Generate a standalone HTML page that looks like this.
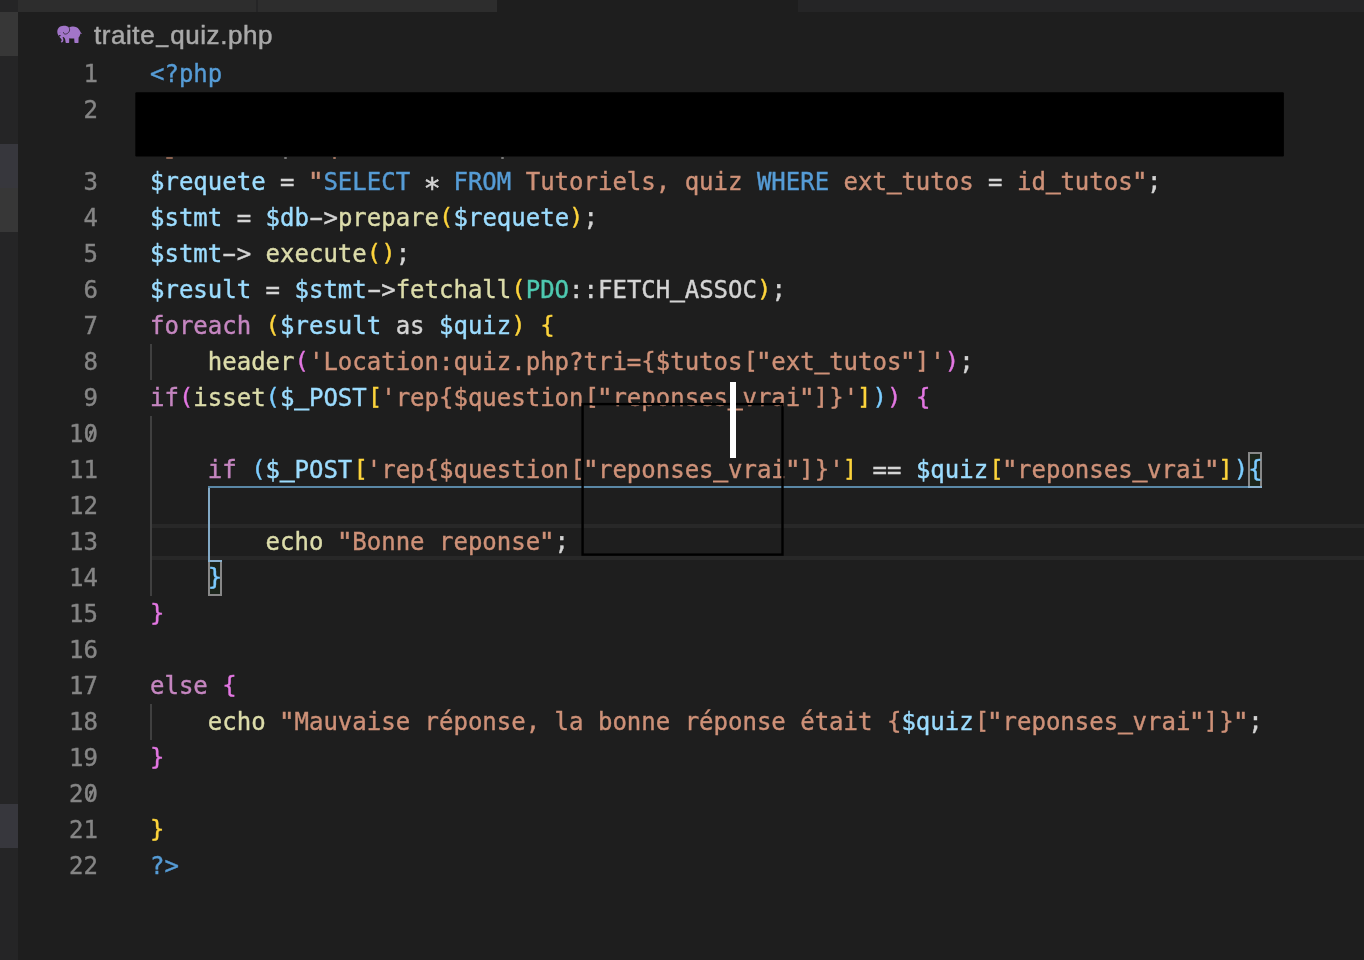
<!DOCTYPE html>
<html lang="fr">
<head>
<meta charset="utf-8">
<title>traite_quiz.php</title>
<style>
*{box-sizing:border-box;margin:0;padding:0}
html,body{width:1364px;height:960px;overflow:hidden;background:#1e1e1e}
body{position:relative;font-family:"DejaVu Sans Mono","Liberation Mono",monospace;color:#d4d4d4}
.abs{position:absolute}
#side{left:0;top:0;width:18px;height:960px;background:#252526}
.row{position:absolute;left:0;width:18px;height:44px}
#tabs{left:18px;top:0;width:1346px;height:12px;background:#252526}
.tab{position:absolute;top:0;height:12px;background:#2d2d2d}
#crumb{left:94px;top:12px;height:44px;line-height:44px;font-family:"Liberation Sans",sans-serif;font-size:26px;letter-spacing:0.56px;color:#a9a9a9;white-space:nowrap;will-change:transform;-webkit-text-stroke:0.5px;transform:translateY(0.5px)}
#ed{left:0;top:56px;width:1364px;height:904px;will-change:transform}
.ln{position:absolute;left:18px;width:80px;height:36px;line-height:36px;font-size:24px;text-align:right;color:#858585;white-space:pre;-webkit-text-stroke:0.4px}
.cl{position:absolute;left:150px;height:36px;line-height:36px;font-size:24px;white-space:pre;-webkit-text-stroke:0.4px}
.v{color:#9cdcfe}.s{color:#ce9178}.k{color:#569cd6}.f{color:#dcdcaa}.c{color:#c586c0}.t{color:#4ec9b0}
.b1{color:#fdd43c}.b2{color:#e377e2}.b3{color:#7ccdff}
i{font-style:normal;display:inline-block}
.u{-webkit-text-stroke:1px;transform:translateY(-2.4px)}
.hy{transform:scaleX(1.8)}
.as{transform:translateY(6px) scale(1.2)}
.br{transform:translateY(-0.7px) scaleY(0.985)}
.bl{transform:translate(1.1px,-0.7px) scaleY(0.985)}
.bq{transform:translate(-1px,-0.7px) scaleY(0.985)}
.z{position:relative}
.z::after{content:"";position:absolute;left:50%;top:50%;width:2.2px;height:14px;background:#858585;transform:translate(-50%,-50%) translate(0.3px,0.3px) rotate(25deg)}
.q{transform:scaleX(1.14);transform-origin:75% 50%}
.ig{position:absolute;width:2px;background:#404040}
</style>
</head>
<body>
<div id="side" class="abs">
  <div class="row" style="top:12px;background:#373737"></div>
  <div class="row" style="top:144px;background:#37373d"></div>
  <div class="row" style="top:188px;background:#373737"></div>
  <div class="row" style="top:804px;background:#37373d"></div>
</div>
<div id="tabs" class="abs">
  <div class="tab" style="left:0;width:238px"></div>
  <div class="tab" style="left:240px;width:239px"></div>
  <div class="tab" style="left:479px;width:301px;background:#1e1e1e"></div>
</div>
<svg class="abs" style="left:54px;top:22px" width="32" height="24" viewBox="0 0 32 24">
  <path fill="#a275c9" d="M3.3 10 C3.2 6.6 5.6 3.9 9.6 3.8 C11.8 3.7 13.9 4.3 15.2 5.6 C16.2 4.9 17.6 4.6 19.2 4.6 C21.6 4.6 23.6 5.6 25 7.4 C25.8 8.4 26.4 9.6 26.7 10.6 C27.1 10.9 27.6 11.4 27.9 12 C27.3 11.9 26.8 11.7 26.4 11.5 C26.2 13 25.5 14.4 24.6 15.6 L24.5 20.3 C24.6 20.7 24.4 20.9 24 20.9 L21 20.9 C20.6 20.9 20.4 20.7 20.4 20.3 L20.2 16.4 C18.6 16.7 16.8 16.6 15.2 16.3 L15.2 20.3 C15.2 20.7 15 20.9 14.6 20.9 L12.2 20.9 C11.8 20.9 11.6 20.7 11.6 20.3 L11.2 17.4 C11 16.5 10.4 15.6 9.4 15 C9 14.8 8.6 14.9 8.7 15.4 C9.3 16.4 9.6 17.6 9.3 18.7 C9 19.8 8.3 20.5 7.5 20.4 C6.9 20.3 6.6 19.8 7 19.4 C7.7 18.8 7.8 18 7.4 17.2 C6.9 16.4 5.8 15.6 5.2 14.6 L6.6 14 C6.9 13.3 6.4 12.8 5.6 12.9 C4.9 13 4.7 13.7 4.9 14.3 C4 13.1 3.4 11.6 3.3 10 Z"/>
  <path fill="none" stroke="#1e1e1e" stroke-width="0.7" stroke-linecap="round" d="M15.1 5.6 C16 7.1 15.8 9 14.7 10.3 C13.7 11.5 12.1 12.3 10.9 12.1 C10 11.9 9.5 11.2 9.4 10.5"/>
  <path fill="#8f66b3" d="M5.3 10.1 h1.4 v0.6 h-1.4z"/>
</svg>
<div id="crumb" class="abs">traite<i style="transform:translateY(-2px) scaleX(.82)">_</i>quiz.php</div>
<div id="ed" class="abs">
<div class="abs" style="left:150px;top:468px;width:1214px;height:36px;border-top:4px solid #282828;border-bottom:4px solid #282828"></div>
<div class="ig" style="left:150px;top:288px;height:36px;background:#404040"></div>
<div class="ig" style="left:150px;top:360px;height:180px;background:#404040"></div>
<div class="ig" style="left:150px;top:648px;height:36px;background:#404040"></div>
<div class="abs" style="left:208px;top:430px;width:1054px;height:2px;background:#5a87a6"></div>
<div class="abs" style="left:208px;top:432px;width:2px;height:72px;background:#82a9c6"></div>
<div class="abs" style="left:208px;top:504px;width:14px;height:36px;border:2px solid #888;background:#1b251b"></div>
<div class="abs" style="left:1248px;top:396px;width:14px;height:36px;border:2px solid #888;background:#1b251b"></div>
<div class="abs" style="left:208px;top:504px;width:14px;height:2px;background:#8ab2cf"></div>
<div class="abs" style="left:1248px;top:430px;width:14px;height:2px;background:#8ab2cf"></div>
<div class="ln" style="top:0px">1</div>
<div class="cl" style="top:0px"><span class="k">&lt;?php</span></div>
<div class="ln" style="top:36px">2</div>
<div class="ln" style="top:108px">3</div>
<div class="cl" style="top:108px"><span class="v">$requete</span> = <span class="s"><i class=q>&quot;</i></span><span class="k">SELECT</span> <i class="as">*</i> <span class="k">FROM</span><span class="s"> Tutoriels, quiz </span><span class="k">WHERE</span><span class="s"> ext<i class="u">_</i>tutos </span>=<span class="s"> id<i class="u">_</i>tutos<i class=q>&quot;</i></span>;</div>
<div class="ln" style="top:144px">4</div>
<div class="cl" style="top:144px"><span class="v">$stmt</span> = <span class="v">$db</span><i class="hy">-</i>&gt;<span class="f">prepare</span><span class="b1"><i class="br">(</i></span><span class="v">$requete</span><span class="b1"><i class="br">)</i></span>;</div>
<div class="ln" style="top:180px">5</div>
<div class="cl" style="top:180px"><span class="v">$stmt</span><i class="hy">-</i>&gt; <span class="f">execute</span><span class="b1"><i class="br">()</i></span>;</div>
<div class="ln" style="top:216px">6</div>
<div class="cl" style="top:216px"><span class="v">$result</span> = <span class="v">$stmt</span><i class="hy">-</i>&gt;<span class="f">fetchall</span><span class="b1"><i class="br">(</i></span><span class="t">PDO</span>::FETCH<i class="u">_</i>ASSOC<span class="b1"><i class="br">)</i></span>;</div>
<div class="ln" style="top:252px">7</div>
<div class="cl" style="top:252px"><span class="c">foreach</span> <span class="b1"><i class="br">(</i></span><span class="v">$result</span> as <span class="v">$quiz</span><span class="b1"><i class="br">)</i></span> <span class="b1"><i class="br">{</i></span></div>
<div class="ln" style="top:288px">8</div>
<div class="cl" style="top:288px">    <span class="f">header</span><span class="b2"><i class="br">(</i></span><span class="s">'Location:quiz.php?tri=<i class="br">{</i>$tutos<i class="bl">[</i><i class=q>&quot;</i>ext<i class="u">_</i>tutos<i class=q>&quot;</i><i class="bq">]</i>'</span><span class="b2"><i class="br">)</i></span>;</div>
<div class="ln" style="top:324px">9</div>
<div class="cl" style="top:324px"><span class="c">if</span><span class="b2"><i class="br">(</i></span><span class="f">isset</span><span class="b3"><i class="br">(</i></span><span class="v">$<i class="u">_</i>POST</span><span class="b1"><i class="bl">[</i></span><span class="s">'rep<i class="br">{</i>$question<i class="bl">[</i><i class=q>&quot;</i>reponses<i class="u">_</i>vrai<i class=q>&quot;</i><i class="bq">]</i><i class="br">}</i>'</span><span class="b1"><i class="bq">]</i></span><span class="b3"><i class="br">)</i></span><span class="b2"><i class="br">)</i></span> <span class="b2"><i class="br">{</i></span></div>
<div class="ln" style="top:360px">1<span class="z">0</span></div>
<div class="ln" style="top:396px">11</div>
<div class="cl" style="top:396px">    <span class="c">if</span> <span class="b3"><i class="br">(</i></span><span class="v">$<i class="u">_</i>POST</span><span class="b1"><i class="bl">[</i></span><span class="s">'rep<i class="br">{</i>$question<i class="bl">[</i><i class=q>&quot;</i>reponses<i class="u">_</i>vrai<i class=q>&quot;</i><i class="bq">]</i><i class="br">}</i>'</span><span class="b1"><i class="bq">]</i></span> == <span class="v">$quiz</span><span class="b1"><i class="bl">[</i></span><span class="s"><i class=q>&quot;</i>reponses<i class="u">_</i>vrai<i class=q>&quot;</i></span><span class="b1"><i class="bq">]</i></span><span class="b3"><i class="br">)</i></span><span class="b3"><i class="br">{</i></span></div>
<div class="ln" style="top:432px">12</div>
<div class="ln" style="top:468px">13</div>
<div class="cl" style="top:468px">        <span class="f">echo</span> <span class="s"><i class=q>&quot;</i>Bonne reponse<i class=q>&quot;</i></span>;</div>
<div class="ln" style="top:504px">14</div>
<div class="cl" style="top:504px">    <span class="b3"><i class="br">}</i></span></div>
<div class="ln" style="top:540px">15</div>
<div class="cl" style="top:540px"><span class="b2"><i class="br">}</i></span></div>
<div class="ln" style="top:576px">16</div>
<div class="ln" style="top:612px">17</div>
<div class="cl" style="top:612px"><span class="c">else</span> <span class="b2"><i class="br">{</i></span></div>
<div class="ln" style="top:648px">18</div>
<div class="cl" style="top:648px">    <span class="f">echo</span> <span class="s"><i class=q>&quot;</i>Mauvaise réponse, la bonne réponse était <i class="br">{</i></span><span class="v">$quiz</span><span class="s"><i class="bl">[</i><i class=q>&quot;</i>reponses<i class="u">_</i>vrai<i class=q>&quot;</i><i class="bq">]</i><i class="br">}</i><i class=q>&quot;</i></span>;</div>
<div class="ln" style="top:684px">19</div>
<div class="cl" style="top:684px"><span class="b2"><i class="br">}</i></span></div>
<div class="ln" style="top:720px">2<span class="z">0</span></div>
<div class="ln" style="top:756px">21</div>
<div class="cl" style="top:756px"><span class="b1"><i class="br">}</i></span></div>
<div class="ln" style="top:792px">22</div>
<div class="cl" style="top:792px"><span class="k">?&gt;</span></div>
</div>
<svg class="abs" style="left:130px;top:88px" width="1160" height="74" viewBox="130 88 1160 74"><rect x="135.3" y="92.2" width="1148.6" height="64.2" rx="1.2" fill="#000"/></svg>
<svg class="abs" style="left:570px;top:395px" width="226" height="170" viewBox="570 395 226 170"><rect x="582.6" y="404.1" width="199.9" height="150.5" fill="none" stroke="#000" stroke-width="2.4"/></svg>
<div class="abs" style="left:166px;top:157px;width:7px;height:2px;border-radius:1px;background:#8a6250"></div>
<div class="abs" style="left:284px;top:157px;width:3px;height:2px;border-radius:1px;background:#777"></div>
<div class="abs" style="left:333px;top:157px;width:3px;height:2px;border-radius:1px;background:#a07460"></div>
<div class="abs" style="left:501px;top:157px;width:3px;height:2px;border-radius:1px;background:#777"></div>
<div class="abs" style="left:730px;top:382px;width:6px;height:76px;background:#fff"></div>
</body>
</html>
